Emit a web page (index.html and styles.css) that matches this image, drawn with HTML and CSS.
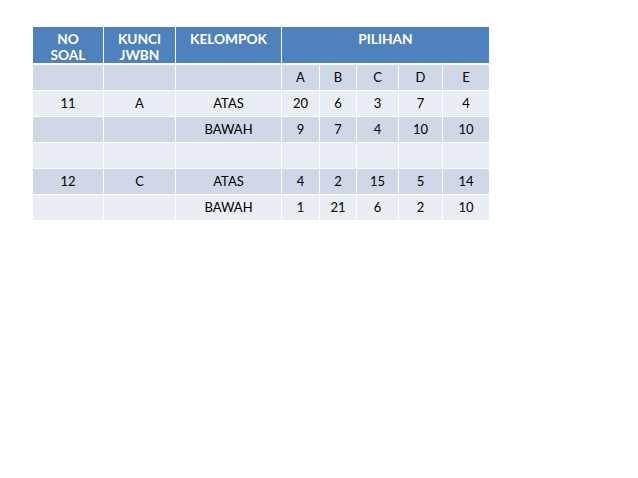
FILE: index.html
```html
<!DOCTYPE html>
<html>
<head>
<meta charset="utf-8">
<link rel="stylesheet" href="styles.css">
</head>
<body>
<table class="grid">
  <colgroup>
    <col class="c-no"><col class="c-kunci"><col class="c-kel">
    <col class="c-a"><col class="c-b"><col class="c-c"><col class="c-d"><col class="c-e">
  </colgroup>
  <thead>
    <tr class="head">
      <th>NO<br>SOAL</th>
      <th>KUNCI<br>JWBN</th>
      <th>KELOMPOK</th>
      <th colspan="5">PILIHAN</th>
    </tr>
  </thead>
  <tbody>
    <tr class="dark"><td></td><td></td><td></td><td>A</td><td>B</td><td>C</td><td>D</td><td>E</td></tr>
    <tr class="light"><td>11</td><td>A</td><td>ATAS</td><td>20</td><td>6</td><td>3</td><td>7</td><td>4</td></tr>
    <tr class="dark"><td></td><td></td><td>BAWAH</td><td>9</td><td>7</td><td>4</td><td>10</td><td>10</td></tr>
    <tr class="light"><td></td><td></td><td></td><td></td><td></td><td></td><td></td><td></td></tr>
    <tr class="dark"><td>12</td><td>C</td><td>ATAS</td><td>4</td><td>2</td><td>15</td><td>5</td><td>14</td></tr>
    <tr class="light"><td></td><td></td><td>BAWAH</td><td>1</td><td>21</td><td>6</td><td>2</td><td>10</td></tr>
  </tbody>
</table>
</body>
</html>
```

FILE: styles.css
```css
html, body {
  margin: 0;
  padding: 0;
  background: #ffffff;
}
body {
  font-family: Lato, "Open Sans", sans-serif;
  font-size: 13px;
  color: #000;
}
.grid {
  margin: 26px 0 0 32px;
  border-collapse: collapse;
  table-layout: fixed;
  width: 457px;
}
.c-no { width: 71px; }
.c-kunci { width: 72px; }
.c-kel { width: 106px; }
.c-a { width: 38px; }
.c-b { width: 37px; }
.c-c { width: 42px; }
.c-d { width: 44px; }
.c-e { width: 47px; }
.grid th, .grid td {
  border: 1px solid #ffffff;
  padding: 0;
  text-align: center;
  vertical-align: middle;
}
.head th {
  background: #4f81bd;
  color: #ffffff;
  font-weight: bold;
  font-size: 13.7px;
  vertical-align: top;
  height: 37px;
  padding-top: 4px;
  line-height: 15.5px;
  box-sizing: border-box;
  border-bottom-width: 2px;
}
.grid td {
  height: 25px;
  line-height: 15px;
}
.dark td { background: #d0d8e8; }
.light td { background: #e9edf4; }
```
